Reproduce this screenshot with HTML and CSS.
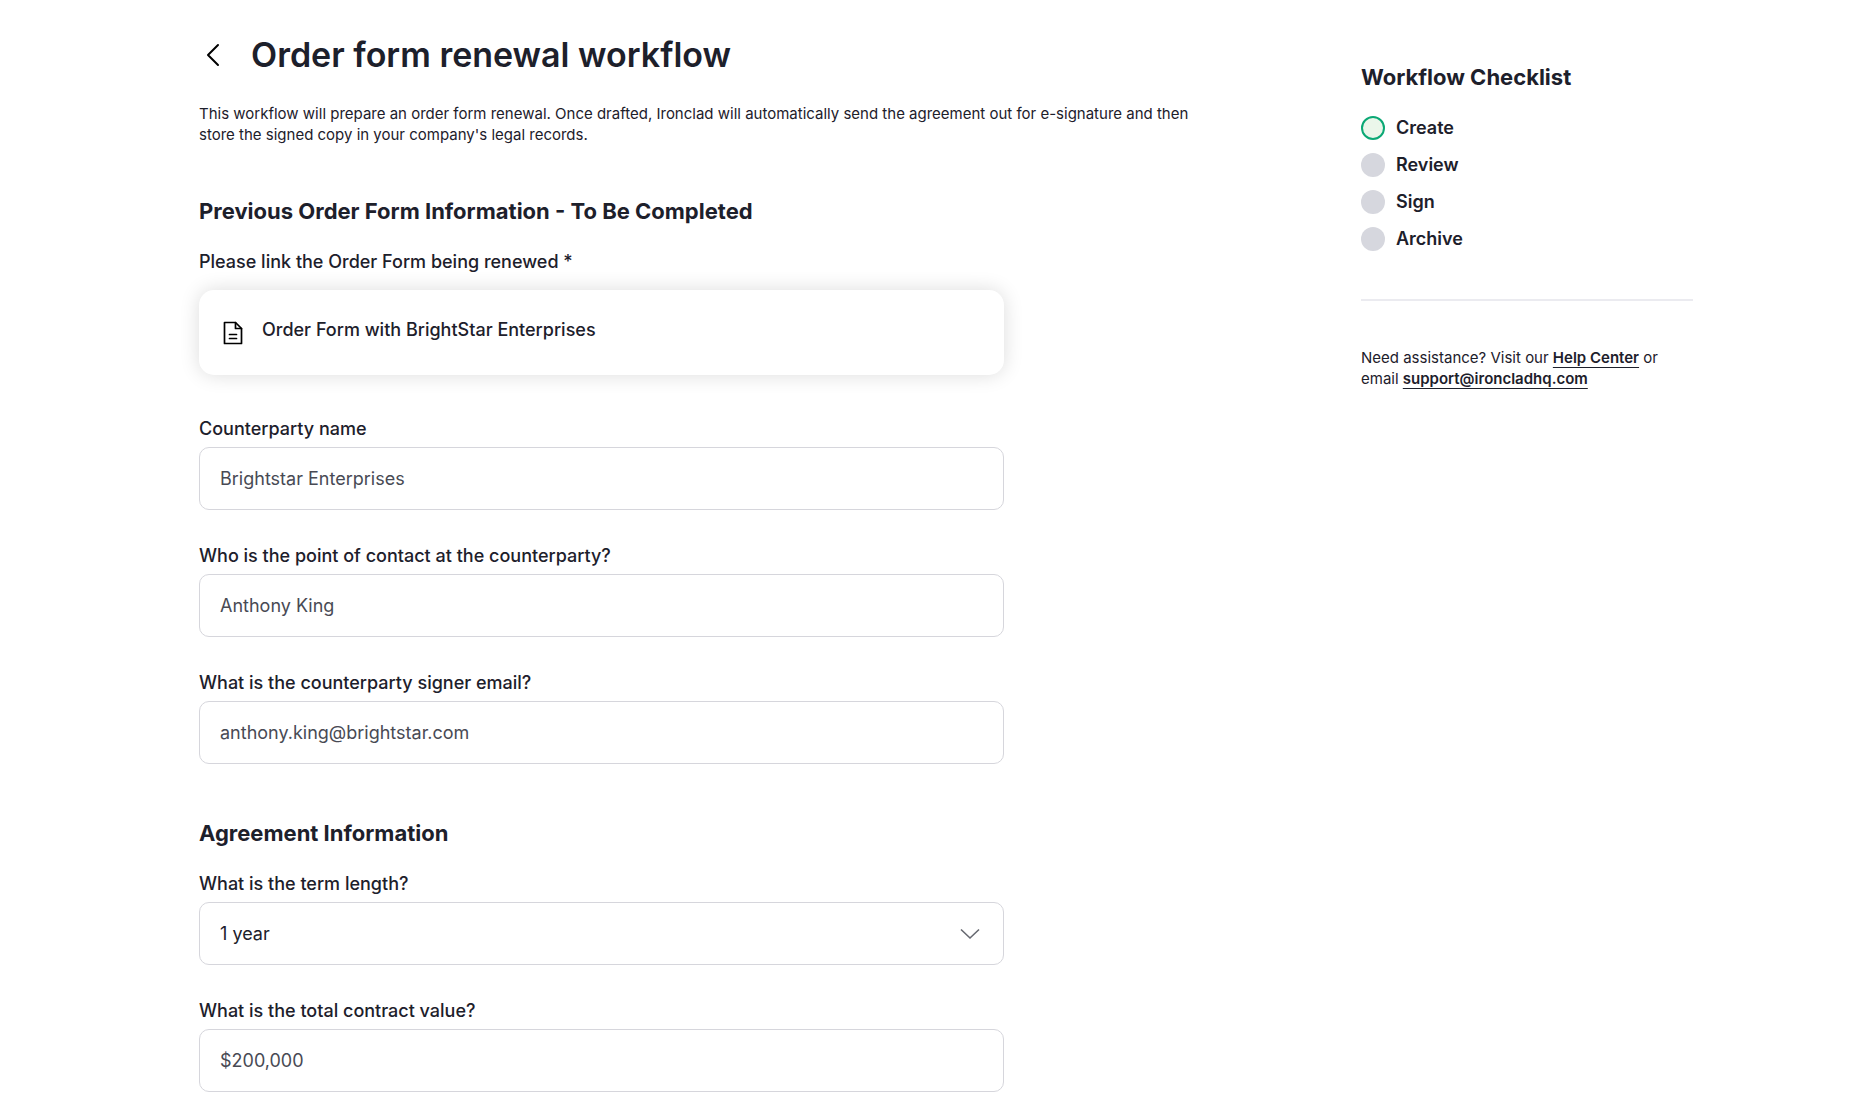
FILE: index.html
```html
<!DOCTYPE html>
<html lang="en">
<head>
    <meta charset="UTF-8">
    <meta name="viewport" content="width=device-width, initial-scale=1.0">
    <title>Order form renewal workflow</title>
    <link rel="stylesheet" href="styles.css">
</head>
<body>
    <div class="page">
        <main class="main">
            <header class="header">
                <button type="button" class="back" aria-label="Back">
                    <svg width="14" height="24" viewBox="0 0 14 24" fill="none" stroke="#000" stroke-width="2" stroke-linecap="round" stroke-linejoin="round">
                        <path d="M12 2 L2 12 L12 22"/>
                    </svg>
                </button>
                <h1>Order form renewal workflow</h1>
            </header>
            <p class="desc">This workflow will prepare an order form renewal. Once drafted, Ironclad will automatically send the agreement out for e-signature and then store the signed copy in your company's legal records.</p>

            <form class="form">
                <section>
                    <h2>Previous Order Form Information - To Be Completed</h2>
                    <div class="field">
                        <label for="linked">Please link the Order Form being renewed *</label>
                        <button type="button" class="card" id="linked">
                            <svg width="20" height="24" viewBox="0 0 20 24" fill="none" stroke="#000" stroke-width="1.7" stroke-linejoin="round" stroke-linecap="round">
                                <path d="M1.5 1.5 H12.5 L18.5 7.5 V22.5 H1.5 Z"/>
                                <path d="M12.5 1.5 V7.5 H18.5"/>
                                <path d="M6.5 13.5 H13.5 M6.5 17.5 H13.5"/>
                            </svg>
                            <span>Order Form with BrightStar Enterprises</span>
                        </button>
                    </div>
                    <div class="field">
                        <label for="counterparty">Counterparty name</label>
                        <input type="text" id="counterparty" name="counterparty" value="Brightstar Enterprises">
                    </div>
                    <div class="field">
                        <label for="contact">Who is the point of contact at the counterparty?</label>
                        <input type="text" id="contact" name="contact" value="Anthony King">
                    </div>
                    <div class="field">
                        <label for="email">What is the counterparty signer email?</label>
                        <input type="email" id="email" name="email" value="anthony.king@brightstar.com">
                    </div>
                </section>

                <section>
                    <h2>Agreement Information</h2>
                    <div class="field">
                        <label for="term">What is the term length?</label>
                        <div class="select">
                            <select id="term" name="term">
                                <option>1 year</option>
                                <option>2 years</option>
                                <option>3 years</option>
                            </select>
                            <svg width="20" height="12" viewBox="0 0 20 12" fill="none" stroke="#666870" stroke-width="1.6">
                                <path d="M1 1.5 L10 10 L19 1.5"/>
                            </svg>
                        </div>
                    </div>
                    <div class="field">
                        <label for="value">What is the total contract value?</label>
                        <input type="text" id="value" name="value" value="$200,000">
                    </div>
                </section>
            </form>
        </main>

        <aside class="sidebar">
            <h2>Workflow Checklist</h2>
            <ul class="steps">
                <li class="active">Create</li>
                <li>Review</li>
                <li>Sign</li>
                <li>Archive</li>
            </ul>
            <hr>
            <p class="help">Need assistance? Visit our <a href="#">Help Center</a> or email <a href="mailto:support@ironcladhq.com">support@ironcladhq.com</a></p>
        </aside>
    </div>
</body>
</html>
```
FILE: styles.css
```css
*, *::before{
    box-sizing: border-box;
}
body{
    margin: 0;
    background-color: white;
    color: #1d202b;
    font-family: Inter, "Liberation Sans", sans-serif;
    font-size: 18px;
    line-height: 24px;
}
h1, h2, p, ul{
    margin: 0;
    padding: 0;
}
.page{
    display: grid;
    grid-template-columns: minmax(0, 1fr) 332px;
    gap: 156px;
    padding: 33px 177px 20px 199px;
}
.header{
    display: flex;
    align-items: center;
    gap: 24px;
}
.back{
    display: flex;
    justify-content: center;
    width: 28px;
    padding: 0;
    border: none;
    background-color: transparent;
}
h1{
    font-size: 34px;
    line-height: 44px;
    font-weight: 600;
}
h2{
    font-size: 22px;
    line-height: 30px;
    font-weight: 700;
}
.desc{
    margin-top: 26px;
    font-size: 15px;
    line-height: 21px;
}
.form{
    margin-top: 51px;
}
.form h2{
    margin-bottom: 24px;
}
.form section + section{
    margin-top: 54px;
}
.field{
    display: flex;
    flex-direction: column;
    gap: 6px;
    max-width: 805px;
    margin-bottom: 34px;
}
.field label{
    font-weight: 500;
}
.card{
    display: flex;
    align-items: center;
    gap: 19px;
    height: 85px;
    margin-top: 10px;
    margin-bottom: 8px;
    padding: 0 24px;
    border: none;
    border-radius: 15px;
    background-color: white;
    color: inherit;
    font: inherit;
    font-weight: 500;
    box-shadow: 0 0 20px rgba(0, 0, 0, 0.14);
}
.card span{
    padding-bottom: 5px;
}
input, select{
    width: 100%;
    height: 63px;
    padding: 0 20px;
    border: solid 1px #d6d6dc;
    border-radius: 10px;
    background-color: white;
    color: #484a54;
    font: inherit;
}
select{
    appearance: none;
    color: #1d202b;
}
.select{
    position: relative;
}
.select svg{
    position: absolute;
    right: 24px;
    top: 26px;
    pointer-events: none;
}
.sidebar{
    padding-top: 29px;
}
.steps{
    display: flex;
    flex-direction: column;
    gap: 13px;
    margin-top: 24px;
    list-style: none;
}
.steps li{
    display: flex;
    align-items: center;
    gap: 11px;
    font-weight: 600;
}
.steps li::before{
    content: "";
    width: 24px;
    height: 24px;
    border-radius: 50%;
    background-color: #d6d7de;
}
.steps .active::before{
    border: solid 2px #0ba875;
    background-color: #ebf6ea;
}
hr{
    height: 2px;
    margin: 48px 0 46px;
    border: none;
    background-color: #ebebf0;
}
.help{
    font-size: 15px;
    line-height: 21px;
}
.help a{
    color: inherit;
    font-weight: 600;
    text-underline-offset: 4px;
}
```
